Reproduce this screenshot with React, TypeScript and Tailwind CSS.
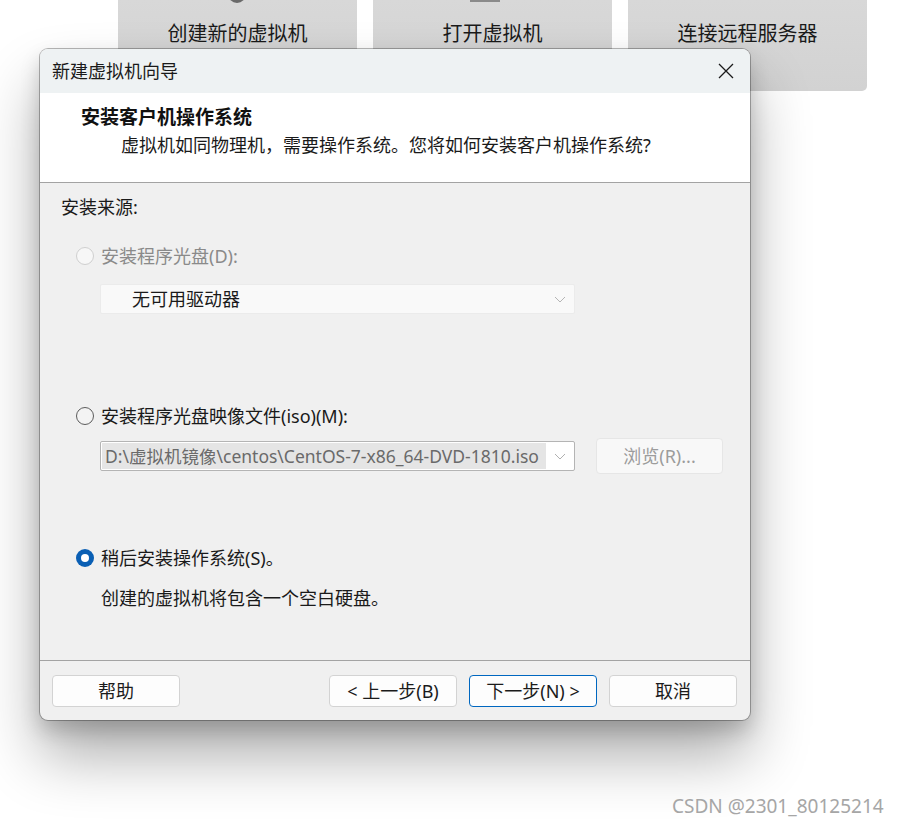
import React from "react";

const FONT = { fontFamily: '"Noto Sans", "Noto Sans CJK SC", sans-serif' };

function Chevron({ color = "#9a9a9a" }: { color?: string }) {
  return (
    <svg width="12" height="7" viewBox="0 0 12 7" fill="none">
      <path d="M1 1l5 5 5-5" stroke={color} strokeWidth="1" />
    </svg>
  );
}

function Radio({ state }: { state: "disabled" | "off" | "on" }) {
  if (state === "on")
    return (
      <span className="w-[18px] h-[18px] rounded-full bg-[#0a5fb4] flex items-center justify-center shrink-0">
        <span className="w-[8px] h-[8px] rounded-full bg-white" />
      </span>
    );
  return (
    <span
      className={
        state === "disabled"
          ? "w-[18px] h-[18px] rounded-full border border-[#cfcfcf] bg-[#f7f7f7] shrink-0"
          : "w-[18px] h-[18px] rounded-full border border-[#5c5c5c] bg-[#f3f3f3] shrink-0"
      }
    />
  );
}

function Btn({ label, primary }: { label: string; primary?: boolean }) {
  return (
    <button
      className={
        "w-[128px] h-[32px] rounded-[4px] bg-[#fdfdfd] text-[18px] text-[#1b1b1b] flex items-center justify-center border " +
        (primary ? "border-[#0067c0]" : "border-[#d3d3d3]")
      }
    >
      {label}
    </button>
  );
}

const cards = ["创建新的虚拟机", "打开虚拟机", "连接远程服务器"];

export default function App() {
  return (
    <div className="relative w-[899px] h-[825px] bg-white overflow-hidden" style={FONT}>
      {/* Background home cards */}
      <div className="flex gap-[16px] pl-[118px]">
        {cards.map((c, i) => (
          <div
            key={c}
            className="relative w-[239px] h-[91px] rounded-b-[5px] bg-gradient-to-b from-[#d8d8d8] to-[#d2d2d2] flex justify-center pt-[20px] text-[20px] text-[#1a1a1a] leading-[28px]"
          >
            {i === 0 && <span className="absolute left-[110px] -top-[16px] w-[18px] h-[19px] rounded-full border-[3px] border-[#6a6a6a]" />}
            {i === 1 && <span className="absolute left-[97px] top-0 w-[30px] h-[2px] bg-[#8a8a8a]" />}
            {c}
          </div>
        ))}
      </div>

      {/* Dialog */}
      <div className="absolute left-[40px] top-[49px] w-[710px] h-[671px] rounded-[8px] overflow-hidden bg-[#f0f0f0] shadow-[0_0_0_1px_rgba(0,0,0,0.28),0_10px_20px_rgba(0,0,0,0.18),0_36px_60px_rgba(0,0,0,0.32)] flex flex-col">
        {/* Title bar */}
        <div className="h-[44px] bg-[#eef2f3] flex items-center justify-between pl-[12px] pr-[16px] shrink-0">
          <span className="text-[18px] text-[#1a1a1a]">新建虚拟机向导</span>
          <svg width="16" height="16" viewBox="0 0 16 16">
            <path d="M1 1l14 14M15 1L1 15" stroke="#1a1a1a" strokeWidth="1.3" />
          </svg>
        </div>

        {/* Header */}
        <div className="h-[90px] bg-white border-b border-[#a3a3a3] shrink-0 pl-[41px] pt-[11px]">
          <div className="text-[19px] font-bold text-[#111] leading-[27px]">安装客户机操作系统</div>
          <div className="pl-[40px] text-[18px] text-[#1a1a1a] leading-[26px] mt-[1px]">
            虚拟机如同物理机，需要操作系统。您将如何安装客户机操作系统?
          </div>
        </div>

        {/* Body */}
        <div className="h-[478px] shrink-0 flex flex-col pl-[21px] pt-[12px] border-b border-[#a3a3a3]">
          <div className="h-[24px] flex items-center text-[18px] text-[#1a1a1a]">安装来源:</div>

          <div className="mt-[25px] h-[24px] flex items-center gap-[7px] pl-[15px] text-[18px] text-[#8a8a8a]">
            <Radio state="disabled" />
            <span>安装程序光盘(D):</span>
          </div>

          <div className="mt-[16px] ml-[39px] w-[475px] h-[30px] bg-[#f9f9f9] border border-[#ebebeb] rounded-[2px] flex items-center justify-between pl-[31px] pr-[8px]">
            <span className="text-[18px] text-[#1a1a1a]">无可用驱动器</span>
            <Chevron color="#b5b5b5" />
          </div>

          <div className="mt-[90px] h-[24px] flex items-center gap-[7px] pl-[15px] text-[18px] text-[#1a1a1a]">
            <Radio state="off" />
            <span>安装程序光盘映像文件(iso)(M):</span>
          </div>

          <div className="mt-[10px] ml-[39px] h-[36px] flex items-center gap-[21px]">
            <div className="w-[475px] h-[30px] bg-white border border-[#b4b4b4] rounded-[2px] flex items-center justify-between pl-[1px] pr-[8px]">
              <span className="h-[26px] w-[444px] bg-[#e5e5e5] flex items-center pl-[3px] text-[17.5px] text-[#6a6a6a] whitespace-nowrap">
                D:\虚拟机镜像\centos\CentOS-7-x86_64-DVD-1810.iso
              </span>
              <Chevron color="#b0b0b0" />
            </div>
            <div className="w-[127px] h-[36px] rounded-[4px] bg-[#f8f8f8] border border-[#e6e6e6] flex items-center justify-center text-[18px] text-[#9c9c9c]">
              浏览(R)...
            </div>
          </div>

          <div className="mt-[72px] h-[24px] flex items-center gap-[7px] pl-[15px] text-[18px] text-[#1a1a1a]">
            <Radio state="on" />
            <span>稍后安装操作系统(S)。</span>
          </div>

          <div className="mt-[16px] h-[24px] flex items-center pl-[40px] text-[18px] text-[#1a1a1a]">
            创建的虚拟机将包含一个空白硬盘。
          </div>
        </div>

        {/* Footer */}
        <div className="flex-1 flex items-start pt-[14px] pl-[12px] pr-[13px]">
          <Btn label="帮助" />
          <div className="ml-auto flex gap-[12px]">
            <Btn label="< 上一步(B)" />
            <Btn label="下一步(N) >" primary />
            <Btn label="取消" />
          </div>
        </div>
      </div>

      {/* Watermark */}
      <div className="absolute left-[672px] top-[793px] text-[19px] leading-[26px] text-[#a6a6a6]">
        CSDN @2301_80125214
      </div>
    </div>
  );
}
